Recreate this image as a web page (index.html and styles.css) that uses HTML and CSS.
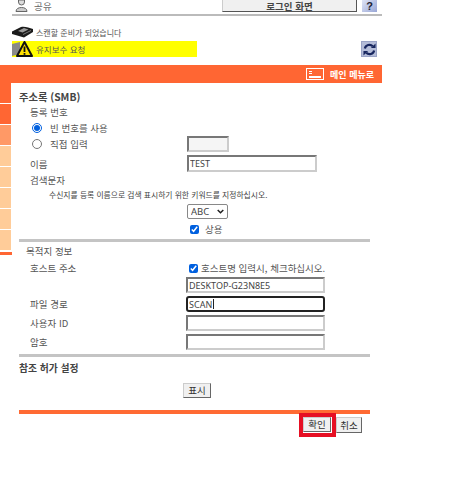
FILE: index.html
```html
<!DOCTYPE html>
<html lang="ko">
<head>
<meta charset="utf-8">
<title>주소록 (SMB)</title>
<link rel="stylesheet" href="styles.css">
</head>
<body>
<div class="page">
  <header class="top">
    <div class="share">
      <svg class="user-icon" width="13" height="12" viewBox="0 0 13 12"><path d="M3.500 0v2a3 3 0 0 0 6 0V0z" fill="#ddd" stroke="#666"/><path d="M1 11.500c0-2.800 2.500-4 5.500-4s5.500 1.200 5.500 4z" fill="#ccc" stroke="#666"/></svg>
      <span>공유</span>
    </div>
    <button class="login">로그인 화면</button>
    <div class="help">?</div>
  </header>
  <div class="status">
    <div class="status-row">
      <svg width="21" height="12" viewBox="0 0 21 12"><path d="M0 5.500 9 1c3-1 8 .5 12 2v3l-9 5.500L0 8z" fill="#1b1b1b"/><path d="M6 5l6-3 4.500 1.500-6 3z" fill="#999"/><path d="M11 8.500l8-4" stroke="#777"/></svg>
      <span>스캔할 준비가 되었습니다</span>
    </div>
    <div class="status-row alert-row">
      <div class="alert">
        <svg width="21" height="16" viewBox="0 0 21 16"><path d="M0 3l8-2v12l-8 2z" fill="#8a8a8a"/><path d="M12.500 1 20 15H5z" fill="#ffe000" stroke="#111" stroke-width="2" stroke-linejoin="round"/><rect x="11.600" y="5.500" width="1.800" height="5.500" fill="#111"/><rect x="11.600" y="12" width="1.800" height="1.800" fill="#111"/></svg>
        <span>유지보수 요청</span>
      </div>
      <div class="refresh"><svg width="13" height="13" viewBox="0 0 14 14"><path d="M2 6a5 5 0 0 1 8.500-2.500M12 8a5 5 0 0 1-8.500 2.500" fill="none" stroke="#18265f" stroke-width="2.400"/><path d="M8.500 5.500 13.500 5.500 13.500 .5zM5.500 8.500 .5 8.500 .5 13.500z" fill="#18265f"/></svg></div>
    </div>
  </div>
  <div class="banner">
    <svg width="18" height="12" viewBox="0 0 18 12"><rect x="0.500" y="0.500" width="17" height="11" fill="none" stroke="#fff"/><path d="M3 3h3v1H3zM3 5h3v1H3zM3 8h12v2H3z" fill="#fff"/></svg>
    <span>메인 메뉴로</span>
  </div>
  <div class="body">
    <nav class="side">
      <i class="c1"></i><i class="c1"></i><i class="c2"></i><i class="c3"></i><i class="c3"></i><i class="c3"></i><i class="c3"></i><i class="c3"></i>
      <b class="side-end"></b>
    </nav>
    <main class="main">
      <h1>주소록 (SMB)</h1>
      <div class="row"><label class="lab">등록 번호</label></div>
      <div class="row radio"><input type="radio" name="n" checked><span class="radio-text">빈 번호를 사용</span></div>
      <div class="row radio"><input type="radio" name="n"><span class="radio-text">직접 입력</span><input class="box tiny" disabled></div>
      <div class="row name-row"><label class="lab lab-w">이름</label><input class="box name" value="TEST"></div>
      <div class="row"><label class="lab">검색문자</label></div>
      <p class="hint">수신지를 등록 이름으로 검색 표시하기 위한 키워드를 지정하십시오.</p>
      <div class="ctl"><select class="sel"><option>ABC</option></select></div>
      <div class="chk"><input type="checkbox" checked><span>상용</span></div>
      <hr class="rule">
      <div class="sect">목적지 정보</div>
      <div class="row host"><label class="lab lab-h">호스트 주소</label><span class="chk2"><input type="checkbox" checked><span>호스트명 입력시, 체크하십시오.</span></span></div>
      <div class="row dest first"><label class="lab lab-d"></label><input class="box wide" value="DESKTOP-G23N8E5"></div>
      <div class="row dest"><label class="lab lab-d">파일 경로</label><input class="box wide focus" value="SCAN"></div>
      <div class="row dest"><label class="lab lab-d">사용자 ID</label><input class="box wide"></div>
      <div class="row dest"><label class="lab lab-d">암호</label><input class="box wide"></div>
      <hr class="rule r2">
      <h2>참조 허가 설정</h2>
      <div class="show"><button class="btn">표시</button></div>
      <hr class="orange">
      <div class="actions"><span class="mark"><button class="btn">확인</button></span><button class="btn cancel">취소</button></div>
    </main>
  </div>
</div>
</body>
</html>
```
FILE: styles.css
```css
* { box-sizing: border-box; }
html, body { margin: 0; padding: 0; background: #fff; }
body { font-family: "Noto Sans CJK KR", "Noto Sans", sans-serif; font-size: 9.500px; color: #555; overflow: hidden; }
.page { width: 474px; height: 493px; }

.top { margin-left: 12px; width: 370px; height: 16px; border-bottom: 2px solid #bbb; display: flex; align-items: flex-start; }
.share { display: flex; gap: 6px; align-items: center; height: 12px; padding-left: 3px; width: 210px; font-size: 9.500px; letter-spacing: .3px; color: #666; }
.user-icon { display: block; }
.login { width: 135px; height: 18px; margin-top: -6px; border: 1px solid #555; border-left-color: #ccc; border-top-color: #ccc; background: #f0f0f0; font: 700 9.500px/10px "Noto Sans CJK KR", sans-serif; color: #444; padding: 5px 0 0; }
.help { width: 15px; height: 12px; margin-left: 5px; background: linear-gradient(135deg, #dfe4f5, #98a6d6); color: #223; font: 700 11px/12px "Liberation Sans", sans-serif; text-align: center; }

.status { padding: 10px 5px 0 12px; width: 382px; height: 49px; }
.status-row { display: flex; align-items: center; gap: 3px; height: 12px; font-size: 8px; color: #555; }
.alert-row { height: 16px; margin-top: 3px; gap: 0; justify-content: space-between; }
.alert { display: flex; align-items: center; gap: 3px; background: #ffff00; width: 185px; height: 16px; font-size: 8.500px; color: #555; }
.refresh { width: 16px; height: 16px; background: #b4bcd8; border: 1px solid #9aa3c6; display: flex; align-items: center; justify-content: center; }

.banner { width: 382px; height: 18px; background: #ff6633; display: flex; justify-content: flex-end; align-items: center; gap: 6px; padding-right: 8px; color: #fff; font-size: 9px; font-weight: 700; }

.body { display: flex; }
.side { width: 11px; flex: none; display: flex; flex-direction: column; gap: 1px; }
.side i { display: block; height: 20px; }
.side .c1 { background: #ff6633; }
.side .c2 { background: #ff9966; }
.side .c3 { background: #ffcc99; }
.side-end { display: block; width: 12px; height: 3px; background: #ff6633; margin-top: 1px; }

.main { width: 351px; margin-left: 8px; }
h1 { margin: 7px 0 0; font-size: 10.300px; line-height: 14px; font-weight: 700; color: #444; }
.row { display: flex; align-items: center; height: 16px; }
.lab { padding-left: 11px; flex: none; color: #555; }
.lab-w { width: 168px; }
.lab-d { width: 167px; }
.lab-h { width: 170px; }

.radio { padding-left: 13px; }
.radio input[type="radio"] { margin: 0 8px 0 0; width: 10px; height: 10px; flex: none; accent-color: #0060df; }
.radio-text { width: 137px; flex: none; }
.tiny { width: 42px; height: 16px; background: #f5f5f5; }

.box { border: 2px solid; border-color: #777 #ccc #ccc #777; padding: 0 1px; font: 9px "Noto Sans", sans-serif; color: #444; outline: none; }
.name-row { height: 17px; margin-top: 3px; }
.name { width: 130px; height: 17px; }

.hint { margin: 1px 0 0; padding-left: 30px; font-size: 7.800px; line-height: 12px; color: #444; white-space: nowrap; }
.ctl { padding-left: 168px; margin-top: 3px; height: 15px; }
.sel { display: block; appearance: none; width: 41px; height: 15px; font: 9.500px "Noto Sans", sans-serif; border: 1px solid #888; border-radius: 2px; color: #444; padding: 0 0 0 3px; background: #fff url("data:image/svg+xml,%3Csvg xmlns='http://www.w3.org/2000/svg' width='7' height='5'%3E%3Cpath d='M.7 1l2.800 2.800L6.300 1' fill='none' stroke='%23222' stroke-width='1.500'/%3E%3C/svg%3E") no-repeat right 3px center; }
.chk { display: flex; align-items: center; gap: 6px; padding-left: 171px; margin-top: 2px; height: 16px; }
.chk input, .chk2 input { margin: 0; width: 9px; height: 9px; flex: none; accent-color: #0060df; }

hr { border: 0; margin: 0; display: block; }
.rule { height: 3px; background: #c4c4c4; margin-top: 2px; }
.sect { padding-left: 7px; margin-top: 2px; height: 14px; line-height: 14px; }
.host { margin-top: 2px; }
.chk2 { display: flex; align-items: center; gap: 3px; white-space: nowrap; }

.dest { margin-top: 3px; }
.dest.first { margin-top: 1px; }
.wide { width: 139px; height: 16px; }
.focus { border: 2px solid #222; border-radius: 3px; background: linear-gradient(#222, #222) no-repeat 25px 1px / 1px 10px; }

.r2 { margin-top: 4px; }
h2 { margin: 4px 0 0; font-size: 9.800px; line-height: 14px; font-weight: 700; color: #444; }
.show { padding-left: 164px; margin-top: 8px; }
.btn { display: block; width: 28px; height: 15px; border: 1px solid; border-color: #ccc #666 #666 #ccc; background: #f0f0f0; font: 9.500px/13px "Noto Sans CJK KR", sans-serif; color: #333; padding: 0; }
.orange { height: 4px; background: #ff6a33; margin-top: 12px; }
.actions { display: flex; align-items: center; justify-content: flex-end; padding-right: 8px; margin-top: -1px; }
.mark { display: block; border: 4px solid #e60f23; padding: 0; height: 24px; width: 37px; }
.cancel { width: 26px; height: 16px; }
```
